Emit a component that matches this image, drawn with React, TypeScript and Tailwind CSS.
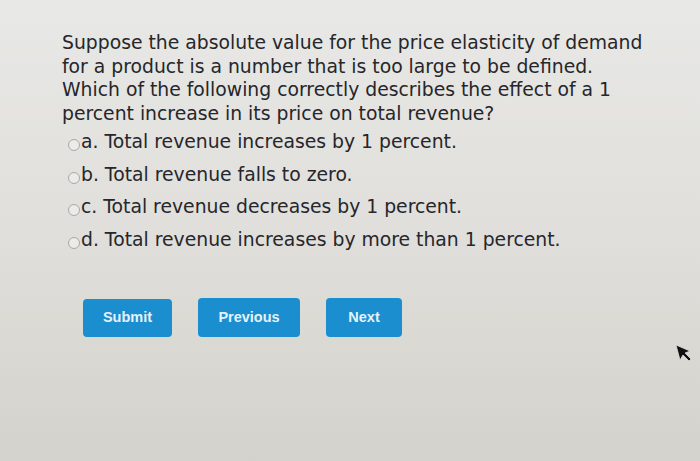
const options = [
  "a. Total revenue increases by 1 percent.",
  "b. Total revenue falls to zero.",
  "c. Total revenue decreases by 1 percent.",
  "d. Total revenue increases by more than 1 percent.",
];

export default function App() {
  return (
    <div className="relative h-[461px] w-[700px] overflow-hidden bg-gradient-to-b from-[#e8e8e6] via-[#e0dfdb] to-[#d4d2cc] font-['DejaVu_Sans',sans-serif] text-[#26262b]">
      <div className="pl-[62px] pt-[31px]">
        <p className="whitespace-nowrap text-[18.8px] leading-[23.5px]">
          Suppose the absolute value for the price elasticity of demand
          <br />
          for a product is a number that is too large to be defined.
          <br />
          Which of the following correctly describes the effect of a 1
          <br />
          percent increase in its price on total revenue?
        </p>
        <div className="mt-[5px] flex flex-col gap-[9px] pl-[6px]">
          {options.map((o) => (
            <label key={o} className="flex items-center whitespace-nowrap text-[18.8px] leading-[23.5px]">
              <span className="mt-[7px] mr-[1px] h-[12px] w-[12px] shrink-0 rounded-full border border-[#a8a8a8] bg-[#ecebe8]" />
              {o}
            </label>
          ))}
        </div>
        <div className="mt-[47px] flex items-center gap-[26px] pl-[21px] font-['Liberation_Sans',sans-serif] text-[14.5px] font-bold text-[#e6f2fa]">
          <button className="h-[38px] w-[89px] rounded-[4px] bg-[#1a8ecf]">Submit</button>
          <button className="h-[39px] w-[102px] rounded-[4px] bg-[#1a8ecf]">Previous</button>
          <button className="h-[39px] w-[76px] rounded-[4px] bg-[#1a8ecf]">Next</button>
        </div>
      </div>
      <svg className="absolute left-[674px] top-[343px]" width="20" height="20" viewBox="0 0 20 20">
        <path d="M2 2 L16 8 L11 10 L17 16 L15 18 L9 12 L6 17 Z" fill="#111" stroke="#ddd" strokeWidth="0.8" />
      </svg>
    </div>
  );
}
